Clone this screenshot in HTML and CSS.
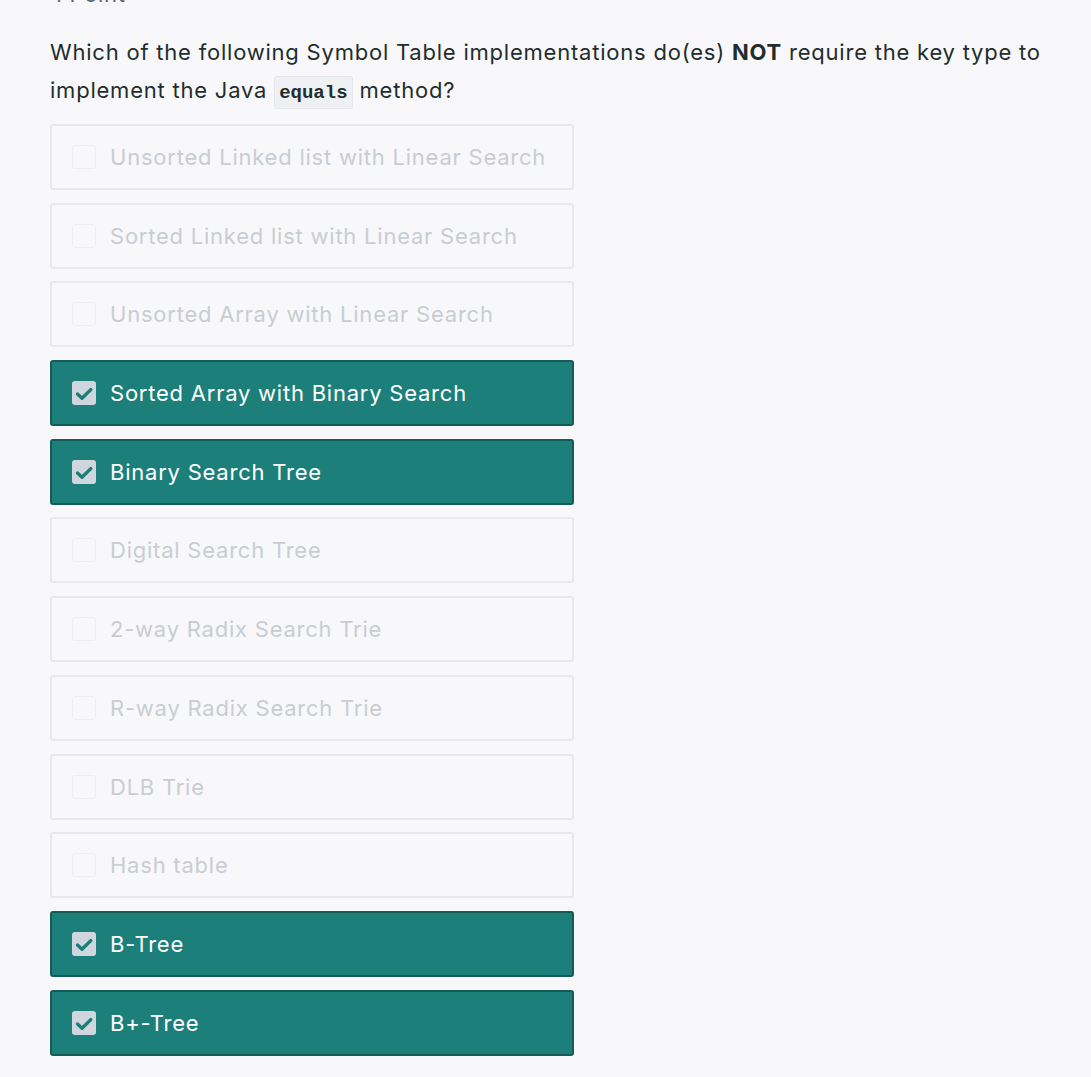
FILE: index.html
```html
<!DOCTYPE html>
<html>
<head>
<meta charset="utf-8">
<link rel="stylesheet" href="styles.css">
</head>
<body>
<div class="page">
  <div class="points">1 Point</div>
  <p class="question">Which of the following Symbol Table implementations do(es) <strong>NOT</strong> require the key type to implement the Java <code>equals</code> method?</p>
  <div class="options">
    <div class="option"><span class="box"></span><span class="label">Unsorted Linked list with Linear Search</span></div>
    <div class="option"><span class="box"></span><span class="label">Sorted Linked list with Linear Search</span></div>
    <div class="option"><span class="box"></span><span class="label">Unsorted Array with Linear Search</span></div>
    <div class="option checked"><span class="box"><svg viewBox="0 0 24 24" width="24" height="24"><path d="M5.5 13l4.5 4.3L18.8 8.6" fill="none" stroke="#1d7f7a" stroke-width="3.4" stroke-linecap="round" stroke-linejoin="round"/></svg></span><span class="label">Sorted Array with Binary Search</span></div>
    <div class="option checked"><span class="box"><svg viewBox="0 0 24 24" width="24" height="24"><path d="M5.5 13l4.5 4.3L18.8 8.6" fill="none" stroke="#1d7f7a" stroke-width="3.4" stroke-linecap="round" stroke-linejoin="round"/></svg></span><span class="label">Binary Search Tree</span></div>
    <div class="option"><span class="box"></span><span class="label">Digital Search Tree</span></div>
    <div class="option"><span class="box"></span><span class="label">2-way Radix Search Trie</span></div>
    <div class="option"><span class="box"></span><span class="label">R-way Radix Search Trie</span></div>
    <div class="option"><span class="box"></span><span class="label">DLB Trie</span></div>
    <div class="option"><span class="box"></span><span class="label">Hash table</span></div>
    <div class="option checked"><span class="box"><svg viewBox="0 0 24 24" width="24" height="24"><path d="M5.5 13l4.5 4.3L18.8 8.6" fill="none" stroke="#1d7f7a" stroke-width="3.4" stroke-linecap="round" stroke-linejoin="round"/></svg></span><span class="label">B-Tree</span></div>
    <div class="option checked"><span class="box"><svg viewBox="0 0 24 24" width="24" height="24"><path d="M5.5 13l4.5 4.3L18.8 8.6" fill="none" stroke="#1d7f7a" stroke-width="3.4" stroke-linecap="round" stroke-linejoin="round"/></svg></span><span class="label">B+-Tree</span></div>
  </div>
</div>
</body>
</html>
```

FILE: styles.css
```css
html, body {
  margin: 0;
  padding: 0;
  background: #f8f8fa;
}
body {
  font-family: Inter, "Open Sans", sans-serif;
  color: #1f2d2d;
}
.page {
  padding: 0 0 0 50px;
  width: 1010px;
}
.points {
  font-size: 22px;
  line-height: 22px;
  color: #5a6670;
  letter-spacing: 0.7px;
  margin-top: -17px;
  padding-left: 3px;
}
.question {
  margin: 28px 0 15px 0;
  font-size: 22px;
  line-height: 38px;
  letter-spacing: 0.78px;
}
.question strong {
  font-weight: 700;
}
.question code {
  display: inline-block;
  font-family: "Liberation Mono", monospace;
  font-weight: 700;
  font-size: 19px;
  letter-spacing: 0;
  line-height: 31px;
  height: 33px;
  box-sizing: border-box;
  vertical-align: middle;
  background: #eef0f3;
  border: 1px solid #e3e6ea;
  border-radius: 3px;
  padding: 1px 4px 0;
}
.options {
  display: flex;
  flex-direction: column;
  gap: 12.7px;
  width: 524px;
}
.option {
  display: flex;
  align-items: center;
  gap: 14px;
  height: 66px;
  box-sizing: border-box;
  padding-left: 20px;
  border: 2px solid #e6e8ec;
  border-radius: 3px;
  background: #f8f8fa;
}
.box {
  width: 24px;
  height: 24px;
  box-sizing: border-box;
  border: 1.5px solid #eceef1;
  border-radius: 3px;
  display: flex;
  align-items: center;
  justify-content: center;
  flex: none;
}
.label {
  font-size: 22px;
  letter-spacing: 0.77px;
  color: #c9cdd1;
}
.option.checked {
  background: #1d7f7a;
  border-color: #155c58;
}
.option.checked .box {
  background: #cfd6dd;
  border: 0;
}
.option.checked .label {
  color: #ffffff;
}
```
